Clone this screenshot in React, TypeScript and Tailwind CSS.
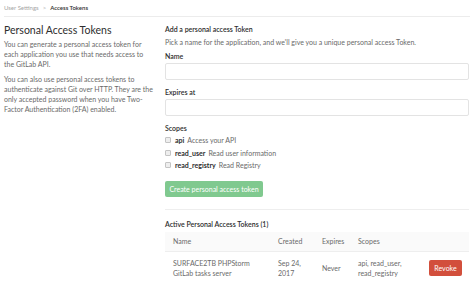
const font = { fontFamily: '"Lato", "Open Sans", sans-serif' }

function Checkbox() {
  return <span className="inline-block w-[6px] h-[6px] rounded-[1px] border border-[#c4c4c4] bg-[#eeeeee] shrink-0" />
}

function ScopeRow({ name, desc }: { name: string; desc: string }) {
  return (
    <label className="flex items-center gap-[3px] h-[12.5px]">
      <Checkbox />
      <span className="font-bold text-[#2e2e2e] ml-[1px]">{name}</span>
      <span>{desc}</span>
    </label>
  )
}

const cols = 'grid grid-cols-[105px_44px_36px_1fr_46px] items-center'

function TokensTable() {
  return (
    <div className="text-[7px] leading-[10px] mt-[2px]">
      <div className={`${cols} h-[20px] bg-[#fafafa] border-b border-[#eeeeee]`}>
        <span className="pl-[8px]">Name</span>
        <span className="pl-[8px]">Created</span>
        <span className="pl-[8px]">Expires</span>
        <span className="pl-[8px]">Scopes</span>
        <span />
      </div>
      <div className={`${cols} h-[32px]`}>
        <span className="pl-[8px]">SURFACE2TB PHPStorm<br />GitLab tasks server</span>
        <span className="pl-[8px]">Sep 24,<br />2017</span>
        <span className="pl-[8px]">Never</span>
        <span className="pl-[8px]">api, read_user,<br />read_registry</span>
        <span className="flex pl-[6px]">
          <button type="button" className="w-[33px] h-[16px] rounded-[2px] bg-[#d24f3c] text-white text-[7px]">Revoke</button>
        </span>
      </div>
    </div>
  )
}

export default function App() {
  return (
    <div className="w-[474px] h-[287px] bg-white text-[#6a6a6a] overflow-hidden" style={font}>
      <nav className="h-[17px] mx-[4px] border-b border-[#ececec] flex items-center gap-[4px] text-[6px] pb-[2px]">
        <span className="text-[#a5a5a5]">User Settings</span>
        <span className="text-[#b5b5b5]">&gt;</span>
        <span className="text-[#2e2e2e] font-semibold">Access Tokens</span>
      </nav>
      <div className="flex pl-[4px] pr-[5px] pt-[6px] gap-[10px]">
        <aside className="w-[151px] shrink-0 text-[7px] leading-[10px]">
          <h2 className="text-[10.5px] leading-[14px] text-[#2e2e2e] mb-[2px]">Personal Access Tokens</h2>
          <p className="mb-[5px]">You can generate a personal access token for each application you use that needs access to the GitLab API.</p>
          <p>You can also use personal access tokens to authenticate against Git over HTTP. They are the only accepted password when you have Two-Factor Authentication (2FA) enabled.</p>
        </aside>
        <section className="flex-1 flex flex-col text-[7px] leading-[10px]">
          <h3 className="text-[#2e2e2e] font-semibold pt-[1px] h-[14px]">Add a personal access Token</h3>
          <p className="h-[14px]">Pick a name for the application, and we'll give you a unique personal access Token.</p>
          <label className="text-[#2e2e2e] font-semibold h-[10px]">Name</label>
          <div className="h-[17px] border border-[#e3e3e3] rounded-[2px] mt-[2px]" />
          <label className="text-[#2e2e2e] font-semibold mt-[7px] h-[10px]">Expires at</label>
          <div className="h-[17px] border border-[#e3e3e3] rounded-[2px] mt-[2px]" />
          <label className="text-[#2e2e2e] font-semibold mt-[7px] h-[11px]">Scopes</label>
          <div className="flex flex-col">
            <ScopeRow name="api" desc="Access your API" />
            <ScopeRow name="read_user" desc="Read user information" />
            <ScopeRow name="read_registry" desc="Read Registry" />
          </div>
          <button type="button" className="self-start mt-[9px] w-[98px] h-[16px] rounded-[2px] bg-[#80c98f] text-white text-[7px]">Create personal access token</button>
          <div className="border-t border-[#eeeeee] mt-[12px]" />
          <h4 className="text-[#2e2e2e] font-semibold mt-[9px] h-[11px]">Active Personal Access Tokens (1)</h4>
          <TokensTable />
        </section>
      </div>
    </div>
  )
}
